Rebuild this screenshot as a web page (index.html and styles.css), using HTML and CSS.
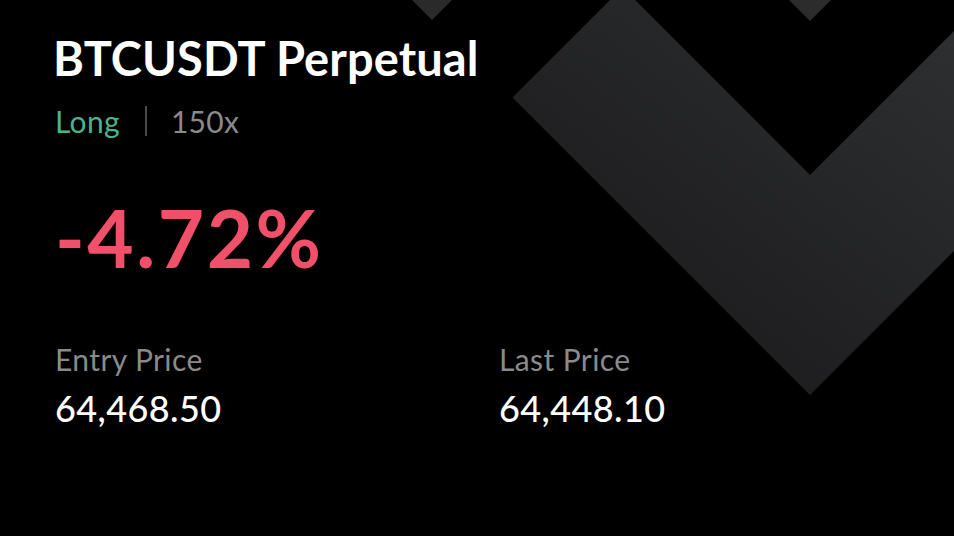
FILE: index.html
```html
<!DOCTYPE html>
<html lang="en">
<head>
<meta charset="utf-8">
<title>BTCUSDT Perpetual</title>
<link rel="stylesheet" href="styles.css">
</head>
<body>
<div class="card">
  <svg class="bg" viewBox="0 0 954 536" width="954" height="536" aria-hidden="true">
    <defs>
      <linearGradient id="chev" x1="954" y1="0" x2="640" y2="420" gradientUnits="userSpaceOnUse">
        <stop offset="0" stop-color="#2f3032"/>
        <stop offset="1" stop-color="#19191a"/>
      </linearGradient>
    </defs>
    <polygon points="622.5,-12.5 512.5,97.5 810,395 1110,95 1110,-125 810,175" fill="url(#chev)"/>
    <polygon points="412,0 452,0 432,20" fill="#2a2a2b"/>
    <polygon points="789,0 831,0 810,21" fill="#2c2c2d"/>
  </svg>
  <div class="content">
    <h1 class="title">BTCUSDT Perpetual</h1>
    <div class="meta">
      <span class="side">Long</span>
      <span class="sep"></span>
      <span class="lev">150x</span>
    </div>
    <div class="pnl">-4.72%</div>
    <div class="prices">
      <div class="price">
        <div class="label">Entry Price</div>
        <div class="value">64,468.50</div>
      </div>
      <div class="price">
        <div class="label">Last Price</div>
        <div class="value">64,448.10</div>
      </div>
    </div>
  </div>
</div>
</body>
</html>
```

FILE: styles.css
```css
html, body {
  margin: 0;
  padding: 0;
  background: #000;
}

.card {
  position: relative;
  width: 954px;
  height: 536px;
  overflow: hidden;
  background: #000;
  font-family: "Lato", "Open Sans", "Liberation Sans", sans-serif;
  color: #fff;
}

.bg {
  position: absolute;
  left: 0;
  top: 0;
  display: block;
}

.content {
  position: relative;
  padding: 30px 0 0 55px;
}

.title {
  margin: 0 0 0 -2px;
  font-size: 47px;
  line-height: 56px;
  font-weight: 700;
  letter-spacing: 0.1px;
  color: #ffffff;
}

.meta {
  display: flex;
  align-items: center;
  margin-top: 18px;
  font-size: 30px;
  line-height: 34px;
  letter-spacing: 0.3px;
}

.side {
  color: #4db38a;
}

.sep {
  width: 2px;
  height: 30px;
  margin: 0 24px 0 25px;
  background: #4a4a4a;
}

.lev {
  color: #8a8a8a;
}

.pnl {
  margin-top: 54px;
  font-size: 80px;
  line-height: 90px;
  font-weight: 700;
  letter-spacing: 2.5px;
  color: #f0506a;
}

.prices {
  display: grid;
  grid-template-columns: 444px 1fr;
  margin-top: 60px;
}

.label {
  font-size: 30px;
  line-height: 34px;
  letter-spacing: 0.4px;
  color: #8a8a8a;
}

.value {
  margin-top: 11px;
  font-size: 36px;
  line-height: 42px;
  font-weight: 500;
  letter-spacing: 0.4px;
  color: #ffffff;
}
```
